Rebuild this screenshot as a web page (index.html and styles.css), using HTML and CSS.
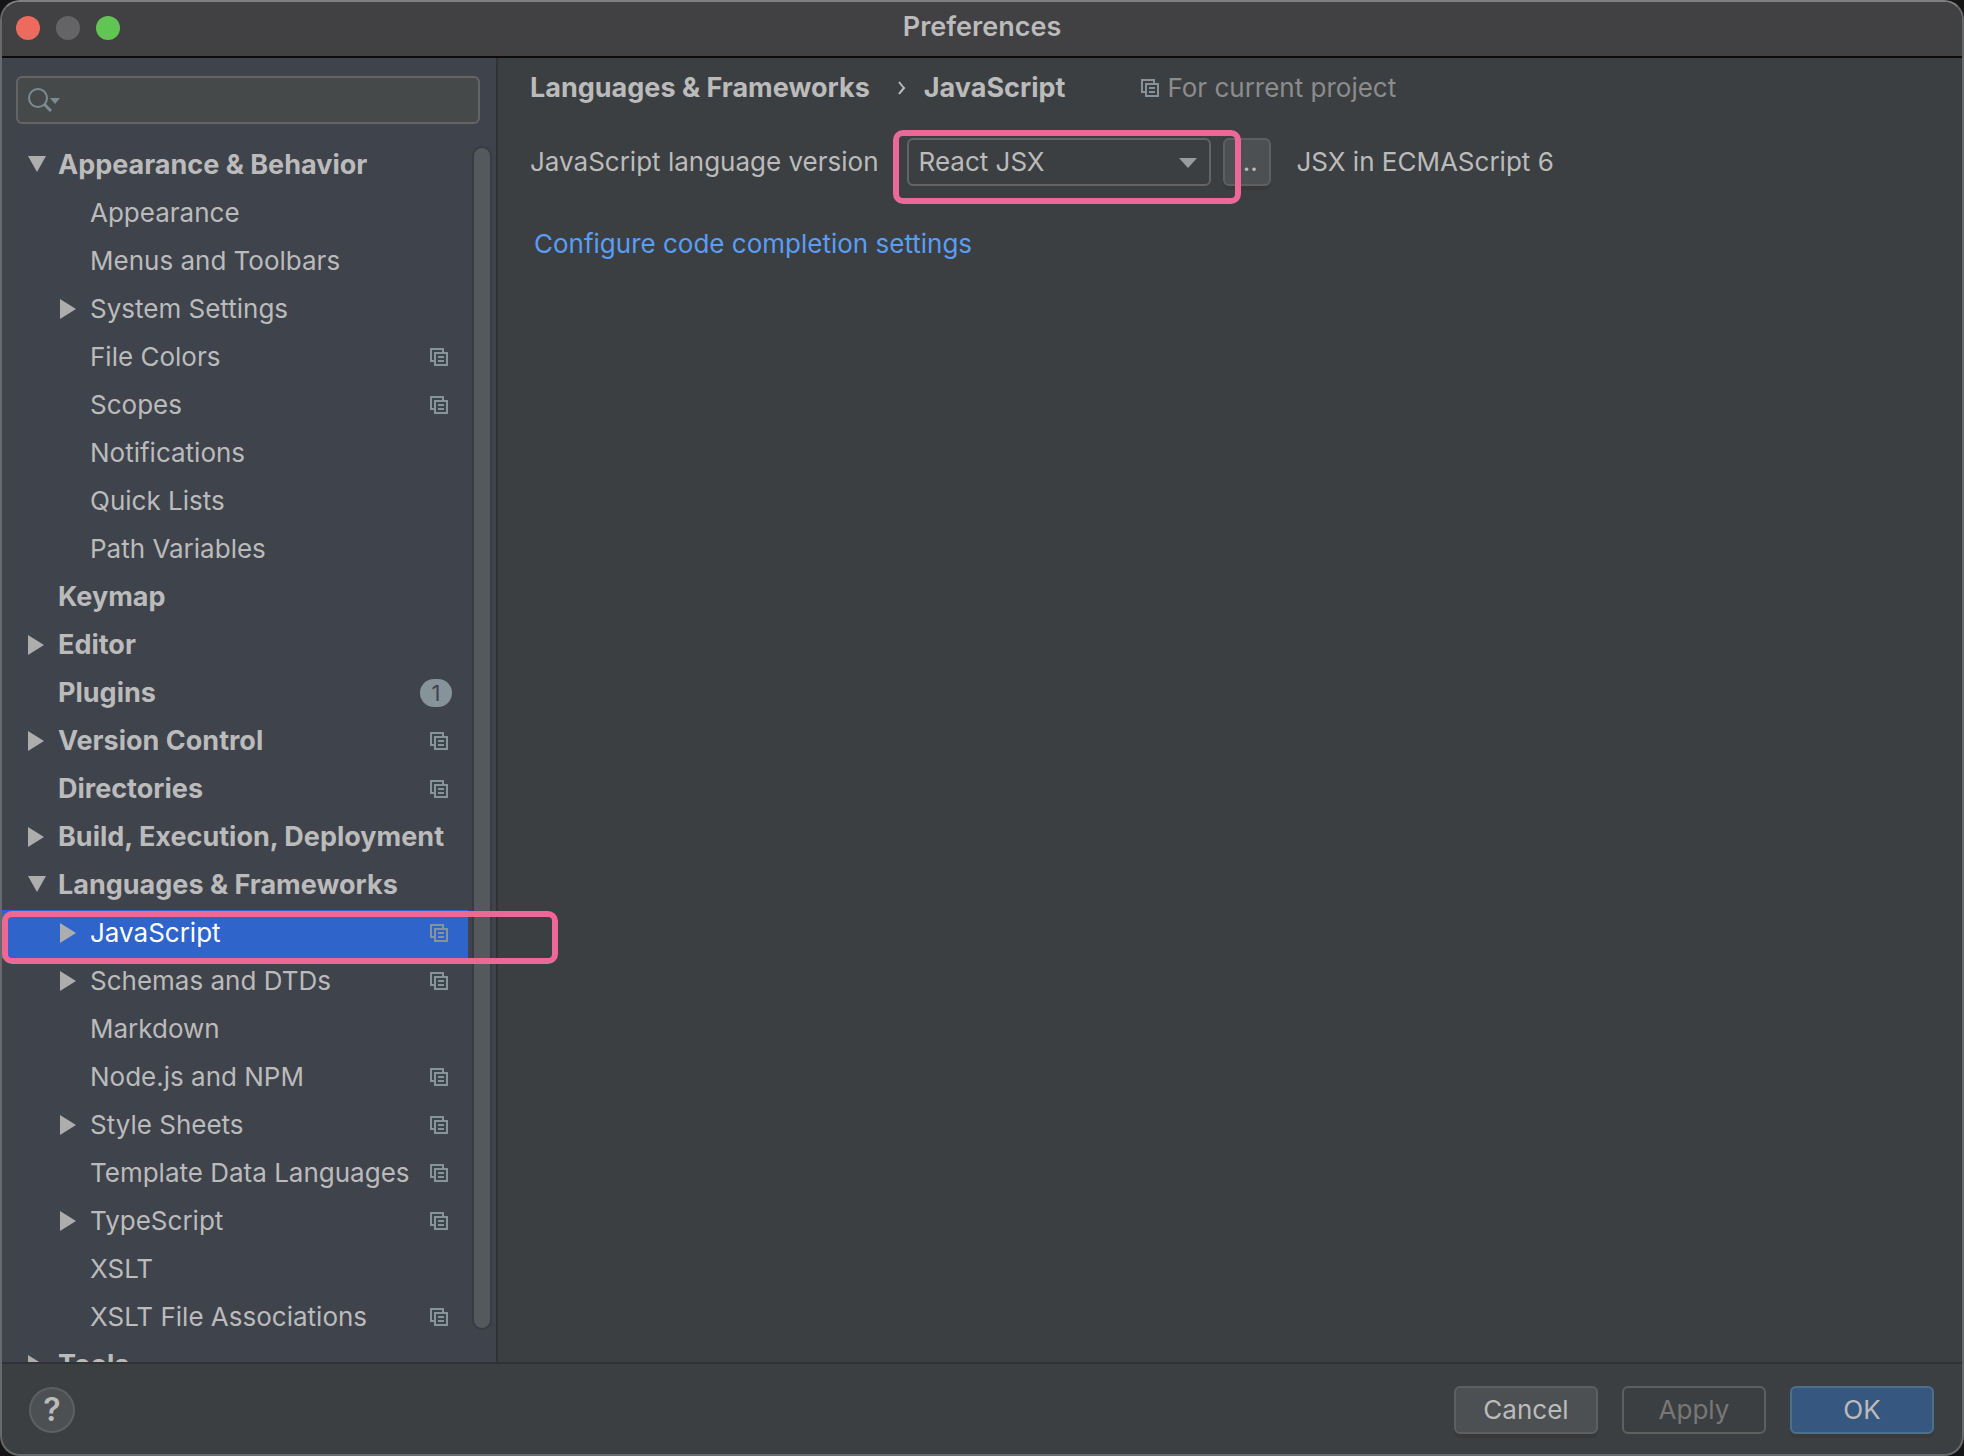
FILE: index.html
```html
<!DOCTYPE html>
<html lang="en">
<head>
    <meta charset="UTF-8">
    <meta name="viewport" content="width=device-width, initial-scale=1.0">
    <title>Preferences</title>
    <link rel="stylesheet" href="styles.css">
</head>
<body>
    <!-- shared icons -->
    <svg class="sprite" aria-hidden="true">
        <symbol id="icon-project" viewBox="0 0 18 18">
            <path d="M5 13H1V1h12v4M5 5h12v12H5zM8 9h6M8 13h6" fill="none" stroke="currentColor" stroke-width="2"/>
        </symbol>
        <symbol id="icon-closed" viewBox="0 0 18 20">
            <path d="M0 0l16 10L0 20z" fill="currentColor"/>
        </symbol>
        <symbol id="icon-open" viewBox="0 0 18 20">
            <path d="M0 1h18L9 17z" fill="currentColor"/>
        </symbol>
    </svg>

    <div class="window">
        <header class="titlebar">
            <div class="lights">
                <button class="light close" aria-label="Close"></button>
                <button class="light minimize" aria-label="Minimize" disabled></button>
                <button class="light zoom" aria-label="Zoom"></button>
            </div>
            <h1>Preferences</h1>
        </header>

        <div class="main">
            <aside class="sidebar">
                <div class="search">
                    <svg class="search-icon" viewBox="0 0 32 24" aria-hidden="true">
                        <circle cx="10" cy="10" r="9" fill="none" stroke="currentColor" stroke-width="2"/>
                        <path d="M16 16l7 7" stroke="currentColor" stroke-width="3"/>
                        <path d="M22 10h10l-5 6z" fill="currentColor"/>
                    </svg>
                    <input type="text" id="search" aria-label="Search settings">
                </div>

                <div class="tree-area">
                    <ul class="tree">
                        <li class="group"><svg class="arrow"><use href="#icon-open"/></svg><a href="#">Appearance &amp; Behavior</a></li>
                        <li class="child"><a href="#">Appearance</a></li>
                        <li class="child"><a href="#">Menus and Toolbars</a></li>
                        <li class="child"><svg class="arrow"><use href="#icon-closed"/></svg><a href="#">System Settings</a></li>
                        <li class="child"><a href="#">File Colors</a><svg class="project"><use href="#icon-project"/></svg></li>
                        <li class="child"><a href="#">Scopes</a><svg class="project"><use href="#icon-project"/></svg></li>
                        <li class="child"><a href="#">Notifications</a></li>
                        <li class="child"><a href="#">Quick Lists</a></li>
                        <li class="child"><a href="#">Path Variables</a></li>
                        <li class="group"><a href="#">Keymap</a></li>
                        <li class="group"><svg class="arrow"><use href="#icon-closed"/></svg><a href="#">Editor</a></li>
                        <li class="group"><a href="#">Plugins</a><span class="badge">1</span></li>
                        <li class="group"><svg class="arrow"><use href="#icon-closed"/></svg><a href="#">Version Control</a><svg class="project"><use href="#icon-project"/></svg></li>
                        <li class="group"><a href="#">Directories</a><svg class="project"><use href="#icon-project"/></svg></li>
                        <li class="group"><svg class="arrow"><use href="#icon-closed"/></svg><a href="#">Build, Execution, Deployment</a></li>
                        <li class="group"><svg class="arrow"><use href="#icon-open"/></svg><a href="#">Languages &amp; Frameworks</a></li>
                        <li class="child selected"><svg class="arrow"><use href="#icon-closed"/></svg><a href="#">JavaScript</a><svg class="project"><use href="#icon-project"/></svg></li>
                        <li class="child"><svg class="arrow"><use href="#icon-closed"/></svg><a href="#">Schemas and DTDs</a><svg class="project"><use href="#icon-project"/></svg></li>
                        <li class="child"><a href="#">Markdown</a></li>
                        <li class="child"><a href="#">Node.js and NPM</a><svg class="project"><use href="#icon-project"/></svg></li>
                        <li class="child"><svg class="arrow"><use href="#icon-closed"/></svg><a href="#">Style Sheets</a><svg class="project"><use href="#icon-project"/></svg></li>
                        <li class="child"><a href="#">Template Data Languages</a><svg class="project"><use href="#icon-project"/></svg></li>
                        <li class="child"><svg class="arrow"><use href="#icon-closed"/></svg><a href="#">TypeScript</a><svg class="project"><use href="#icon-project"/></svg></li>
                        <li class="child"><a href="#">XSLT</a></li>
                        <li class="child"><a href="#">XSLT File Associations</a><svg class="project"><use href="#icon-project"/></svg></li>
                        <li class="group"><svg class="arrow"><use href="#icon-closed"/></svg><a href="#">Tools</a></li>
                    </ul>
                    <div class="scrollbar"><div class="thumb"></div></div>
                </div>
            </aside>

            <main class="content">
                <div class="breadcrumbs">
                    <h2>Languages &amp; Frameworks</h2>
                    <svg class="chevron" viewBox="0 0 8 14" aria-hidden="true"><path d="M1 1q4 5 5 6q-1 1-5 6" fill="none" stroke="currentColor" stroke-width="2"/></svg>
                    <h2>JavaScript</h2>
                    <span class="scope"><svg class="project"><use href="#icon-project"/></svg>For current project</span>
                </div>

                <div class="version-row">
                    <label for="version">JavaScript language version</label>
                    <div class="select-wrap">
                        <select id="version">
                            <option selected>React JSX</option>
                            <option>ECMAScript 5.1</option>
                            <option>ECMAScript 6+</option>
                            <option>Flow</option>
                        </select>
                        <svg class="caret" viewBox="0 0 18 10" aria-hidden="true"><path d="M0 0h18l-9 10z" fill="currentColor"/></svg>
                    </div>
                    <button class="btn more">...</button>
                    <span class="hint">JSX in ECMAScript 6</span>
                </div>

                <a class="configure" href="#">Configure code completion settings</a>
            </main>
        </div>

        <footer class="footer">
            <button class="help" aria-label="Help">?</button>
            <div class="actions">
                <button class="btn">Cancel</button>
                <button class="btn" disabled>Apply</button>
                <button class="btn primary">OK</button>
            </div>
        </footer>
    </div>
</body>
</html>
```
FILE: styles.css
```css
:root {
    --bg-color: #3c3f41;
    --sidebar-color: #3f434c;
    --text-color: #bbbbbb;
    --muted-color: #8c8c8c;
    --icon-color: #87939a;
    --border-color: #5e6060;
    --line-color: #323232;
    --select-color: #2f65ca;
    --mark-color: #ec6896;
}

* {
    box-sizing: border-box;
    margin: 0;
    padding: 0;
}

body {
    font-family: Inter, 'Liberation Sans', sans-serif;
    font-size: 26px;
    font-optical-sizing: none;
    line-height: 32px;
    background-color: #151515;
    color: var(--text-color);
}

button, input, select {
    font: inherit;
    color: inherit;
}

a {
    color: inherit;
    text-decoration: none;
}

.sprite {
    display: none;
}

.window {
    display: flex;
    flex-direction: column;
    height: 100vh;
    border: 2px solid #67696a;
    border-top-color: #808080;
    border-radius: 20px;
    overflow: hidden;
    background-color: var(--bg-color);
}

/* title bar */
.titlebar {
    display: grid;
    grid-template-columns: 1fr auto 1fr;
    align-items: center;
    height: 56px;
    padding: 0 14px 4px;
    background-color: #414042;
    border-bottom: 2px solid #0c0c0c;
    flex: none;
}

.titlebar h1 {
    font-size: 27px;
    font-weight: 600;
}

.lights {
    display: flex;
    gap: 16px;
    padding-top: 2px;
}

.light {
    width: 24px;
    height: 24px;
    border: none;
    border-radius: 50%;
}

.close { background-color: #ed6a5e; }
.minimize { background-color: #646366; }
.zoom { background-color: #61c554; }

.main {
    display: flex;
    flex: 1;
    min-height: 0;
}

/* sidebar */
.sidebar {
    position: relative;
    z-index: 1;
    display: flex;
    flex-direction: column;
    width: 496px;
    flex: none;
    background-color: var(--sidebar-color);
    border-right: 2px solid var(--line-color);
}

.search {
    display: flex;
    align-items: center;
    gap: 8px;
    height: 48px;
    margin: 18px 16px 18px 14px;
    padding: 0 10px;
    background-color: #45494a;
    border: 2px solid #646464;
    border-radius: 6px;
    flex: none;
}

.search-icon {
    width: 32px;
    height: 24px;
    color: #7d8b93;
}

.search input {
    flex: 1;
    min-width: 0;
    background: none;
    border: none;
    outline: none;
}

.tree-area {
    display: flex;
    flex: 1;
    min-height: 0;
    overflow-y: clip;
}

.tree {
    flex: 1;
    list-style: none;
}

.tree li {
    position: relative;
    display: flex;
    align-items: center;
    height: 48px;
    padding: 0 20px 2px 56px;
    white-space: nowrap;
}

.tree li.child {
    padding-left: 88px;
}

.tree .group {
    font-size: 27px;
    font-weight: 700;
}

.arrow {
    width: 18px;
    height: 20px;
    margin-left: -30px;
    margin-right: 12px;
    color: #adadad;
}

.project {
    width: 18px;
    height: 18px;
    color: var(--icon-color);
}

.tree .project, .badge {
    margin-left: auto;
}

.badge {
    width: 32px;
    height: 28px;
    margin-right: -4px;
    border-radius: 14px;
    background-color: var(--icon-color);
    color: var(--sidebar-color);
    font-size: 22px;
    font-weight: 400;
    line-height: 28px;
    text-align: center;
}

.tree .selected {
    background-color: var(--select-color);
    color: white;
}

/* frames around the highlighted controls */
.selected::after, .select-wrap::after {
    content: "";
    position: absolute;
    border: 6px solid var(--mark-color);
    border-radius: 10px;
    pointer-events: none;
}

.selected::after {
    top: 1px;
    left: 0;
    right: -90px;
    bottom: -6px;
    z-index: 1;
}

.scrollbar {
    width: 28px;
    padding: 4px 4px 32px;
    flex: none;
}

.thumb {
    width: 20px;
    height: 100%;
    background-color: #55585c;
    border: 2px solid #383b40;
    border-radius: 10px;
}

/* content */
.content {
    flex: 1;
    padding: 14px 32px;
}

.breadcrumbs {
    display: flex;
    align-items: center;
}

.breadcrumbs h2 {
    font-size: 27px;
    font-weight: 700;
}

.chevron {
    width: 8px;
    height: 14px;
    margin: 0 18px 0 28px;
}

.scope {
    display: flex;
    align-items: center;
    gap: 8px;
    margin-left: 76px;
    color: var(--muted-color);
}

.version-row {
    display: flex;
    align-items: center;
    height: 48px;
    margin-top: 34px;
}

.select-wrap {
    position: relative;
    width: 304px;
    height: 48px;
    margin-left: 28px;
}

.select-wrap::after {
    top: -8px;
    left: -14px;
    right: -30px;
    bottom: -18px;
    z-index: 1;
}

.select-wrap select {
    appearance: none;
    width: 100%;
    height: 100%;
    padding: 0 48px 0 10px;
    background-color: var(--bg-color);
    border: 2px solid #646464;
    border-radius: 6px;
}

.caret {
    position: absolute;
    top: 20px;
    right: 14px;
    width: 18px;
    height: 10px;
    color: #9a9da0;
    pointer-events: none;
}

.btn {
    width: 144px;
    height: 48px;
    background-color: #4c5052;
    border: 2px solid var(--border-color);
    border-radius: 6px;
    box-shadow: 0 4px 0 #37393a;
}

.btn.more {
    width: 48px;
    margin-left: 12px;
}

.btn:disabled {
    background: none;
    box-shadow: none;
    color: #777777;
}

.btn.primary {
    background-color: #365880;
    border-color: #4c708c;
}

.hint {
    margin-left: 26px;
}

.configure {
    display: inline-block;
    margin: 42px 0 0 4px;
    color: #589df6;
}

/* footer */
.footer {
    display: flex;
    align-items: center;
    justify-content: space-between;
    height: 92px;
    padding: 2px 28px 0 27px;
    border-top: 2px solid var(--line-color);
    flex: none;
}

.help {
    width: 46px;
    height: 46px;
    border: 2px solid var(--border-color);
    border-radius: 50%;
    background-color: #4c5052;
    font-size: 32px;
    font-weight: 600;
    line-height: 40px;
}

.actions {
    display: flex;
    gap: 24px;
}
```
